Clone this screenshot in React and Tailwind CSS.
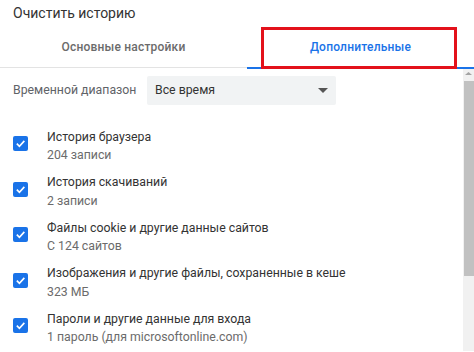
import React from "react";

const rows = [
  ["История браузера", "204 записи"],
  ["История скачиваний", "2 записи"],
  ["Файлы cookie и другие данные сайтов", "С 124 сайтов"],
  ["Изображения и другие файлы, сохраненные в кеше", "323 МБ"],
  ["Пароли и другие данные для входа", "1 пароль (для microsoftonline.com)"],
];

function Check() {
  return (
    <div className="w-[15px] h-[15px] rounded-[2px] bg-[#1a73e8] flex items-center justify-center shrink-0">
      <svg width="11" height="11" viewBox="0 0 12 12">
        <path d="M2 6.2 L4.8 9 L10.2 3.2" fill="none" stroke="white" strokeWidth="1.8" />
      </svg>
    </div>
  );
}

export default function App() {
  return (
    <div
      className="relative w-[474px] h-[352px] bg-white overflow-hidden text-[#333]"
      style={{ fontFamily: "Roboto, 'Liberation Sans', sans-serif" }}
    >
      <div className="h-[27px] px-[13px] pt-[1px] text-[14px] leading-[24px] text-[#333]">
        Очистить историю
      </div>
      <div className="relative flex h-[41px] border-b border-[#e3e3e3]">
        <div className="w-[247px] flex items-center justify-center text-[12px] font-medium text-[#6b6b6b] tracking-[0.2px]">
          Основные настройки
        </div>
        <div className="flex-1 relative flex items-center justify-center text-[12px] font-medium text-[#1a73e8] tracking-[0.2px]">
          Дополнительные
          <div className="absolute left-0 right-0 bottom-[-2px] h-[2px] bg-[#1a73e8]" />
        </div>
      </div>
      <div className="absolute left-[261px] top-[27px] w-[196px] h-[42px] border-[3px] border-[#e3111b]" />
      <div className="flex h-[283px]">
        <div className="flex-1">
          <div className="flex items-center pt-[8px] pl-[13px]">
            <div className="w-[134px] text-[12.3px] text-[#5f6368]">Временной диапазон</div>
            <div className="w-[189px] h-[29px] bg-[#f1f3f4] rounded-[2px] flex items-center justify-between pl-[8px] pr-[8px] text-[12.3px] text-[#333]">
              <span>Все время</span>
              <svg width="10" height="6" viewBox="0 0 10 6">
                <path d="M0 0 L10 0 L5 5 Z" fill="#555" />
              </svg>
            </div>
          </div>
          <div className="mt-[16px]">
            {rows.map(([a, b]) => (
              <div key={a} className="h-[45.5px] flex items-center pl-[13px]">
                <Check />
                <div className="ml-[19px] pt-[5px] flex flex-col">
                  <div className="text-[12.3px] leading-[18.5px] text-[#333]">{a}</div>
                  <div className="text-[12.3px] leading-[18.5px] text-[#6b6b6b]">{b}</div>
                </div>
              </div>
            ))}
          </div>
        </div>
        <div className="w-[11px] bg-[#f1f1f1] flex flex-col items-center">
          <svg width="7" height="6" viewBox="0 0 7 6" className="mt-[3px]">
            <path d="M0 4 L3.5 1 L7 4 Z" fill="#a3a3a3" />
          </svg>
          <div className="mt-[4px] w-[10px] h-[195px] bg-[#c1c1c1]" />
        </div>
      </div>
    </div>
  );
}
